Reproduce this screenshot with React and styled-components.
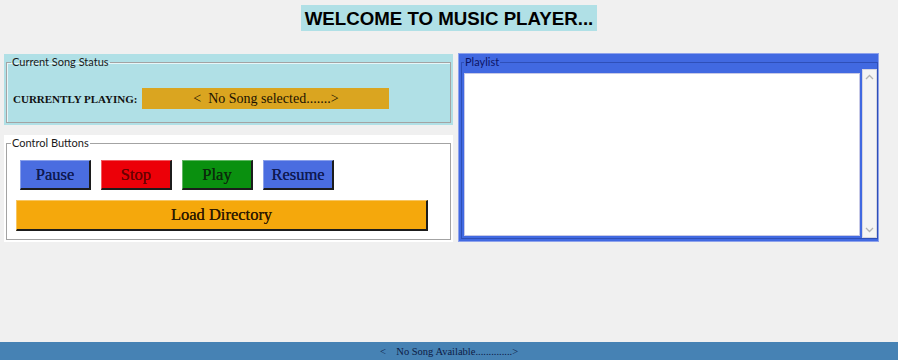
import React from 'react';
import styled, { createGlobalStyle } from 'styled-components';

const Global = createGlobalStyle`
  html, body {
    margin: 0;
    padding: 0;
    background: #f0f0f0;
  }
  #root {
    width: 898px;
    height: 360px;
    display: flex;
    flex-direction: column;
    overflow: hidden;
  }
`;

const Title = styled.h1`
  align-self: center;
  margin: 5px 0 0;
  height: 26px;
  width: 296px;
  box-sizing: border-box;
  background: #b0e0e6;
  font-family: "Liberation Sans", Arial, sans-serif;
  font-weight: bold;
  font-size: 18.7px;
  line-height: 27px;
  text-align: center;
  color: #000;
`;

const Main = styled.div`
  display: flex;
  gap: 5px;
  margin-top: 22px;
  padding-left: 4px;
`;

const LeftColumn = styled.div`
  display: flex;
  flex-direction: column;
  gap: 10px;
  width: 449px;
  margin-top: 1px;
`;

const Panel = styled.div`
  box-sizing: border-box;
  height: ${props => props.h}px;
  padding: 2px;
  background: ${props => props.bg};
  display: flex;
`;

const Group = styled.fieldset`
  flex: 1;
  margin: 0;
  min-width: 0;
  border: 1px solid #a3a3a3;
  box-shadow: inset 1px 1px 0 rgba(255,255,255,0.7);
  padding: 0 0 0 4px;
  display: flex;
  flex-direction: column;
`;

const Legend = styled.legend`
  padding: 0 1px;
  height: 12px;
  font-family: Lato, "Noto Sans", sans-serif;
  font-size: 11px;
  line-height: 12px;
  color: ${props => props.color || '#1a1a1a'};
`;

const StatusRow = styled.div`
  display: flex;
  align-items: center;
  gap: 5px;
  padding: 20px 0 0 2px;
`;

const StatusLabel = styled.span`
  font-family: "Liberation Serif", "Times New Roman", serif;
  font-weight: bold;
  font-size: 11px;
  color: #111;
`;

const NowPlaying = styled.div`
  width: 247px;
  height: 21px;
  background: #daa520;
  font-family: "Liberation Serif", "Times New Roman", serif;
  font-size: 14px;
  line-height: 22px;
  text-align: center;
  white-space: pre;
  color: #1a1200;
`;

const ButtonRow = styled.div`
  display: flex;
  gap: 10px;
  padding: 11px 0 0 9px;
`;

const Btn = styled.button`
  box-sizing: border-box;
  width: ${props => props.w || 71}px;
  height: ${props => props.h || 30}px;
  margin: 0;
  padding: 0;
  background: ${props => props.bg};
  color: ${props => props.fg};
  border-style: solid;
  border-width: 1px 2px 2px 1px;
  border-color: rgba(255,255,255,0.35) #1c1c1c #1c1c1c rgba(255,255,255,0.35);
  font-family: "Liberation Serif", Georgia, serif;
  font-size: 16.5px;
  text-shadow: 0 0 0.4px currentColor;
  cursor: pointer;
`;

const LoadRow = styled.div`
  padding: 10px 0 0 5px;
`;

const PlaylistPanel = styled.div`
  box-sizing: border-box;
  width: 421px;
  height: 189px;
  background: #4169e1;
  border: 1px solid #8ea2ec;
  padding: 2px 0 2px 2px;
  display: flex;
`;

const PlaylistGroup = styled.fieldset`
  flex: 1;
  margin: 0;
  min-width: 0;
  border: 1px solid #2e4fb8;
  padding: 1px 0 0 2px;
  display: flex;
  gap: 2px;
`;

const ListBox = styled.div`
  flex: 1;
  margin: 4px 0 2px;
  background: #fff;
  border: 1px solid #c7c9e6;
`;

const ScrollBar = styled.div`
  width: 15px;
  background: #f4f4f4;
  border: 1px solid #d6d6e0;
  display: flex;
  flex-direction: column;
  justify-content: space-between;
  align-items: center;
  padding: 4px 0;
  box-sizing: border-box;
`;

const Footer = styled.div`
  margin-top: auto;
  height: 18px;
  background: #4682b4;
  font-family: "Liberation Serif", "Times New Roman", serif;
  font-size: 10.5px;
  line-height: 19px;
  text-align: center;
  white-space: pre;
  color: #0d1b45;
`;

const Arrow = ({ down }) => (
  <svg width="9" height="6" viewBox="0 0 9 6">
    <path
      d={down ? 'M1 1 L4.5 4.5 L8 1' : 'M1 5 L4.5 1.5 L8 5'}
      fill="none"
      stroke="#b4b4b4"
      strokeWidth="1.3"
    />
  </svg>
);

const buttons = [
  { label: 'Pause', bg: '#4a6de0', fg: '#0f1a52' },
  { label: 'Stop', bg: '#ec0008', fg: '#6a0000' },
  { label: 'Play', bg: '#0a900f', fg: '#0b2a0b' },
  { label: 'Resume', bg: '#4a6de0', fg: '#0f1a52' },
];

export default function App() {
  return (
    <>
      <Global />
      <Title>WELCOME TO MUSIC PLAYER...</Title>
      <Main>
        <LeftColumn>
          <Panel h={71} bg="#b0e0e6">
            <Group>
              <Legend>Current Song Status</Legend>
              <StatusRow>
                <StatusLabel>CURRENTLY PLAYING:</StatusLabel>
                <NowPlaying>{'<  No Song selected.......>'}</NowPlaying>
              </StatusRow>
            </Group>
          </Panel>
          <Panel h={107} bg="#ffffff">
            <Group>
              <Legend>Control Buttons</Legend>
              <ButtonRow>
                {buttons.map(b => (
                  <Btn key={b.label} bg={b.bg} fg={b.fg}>{b.label}</Btn>
                ))}
              </ButtonRow>
              <LoadRow>
                <Btn w={412} h={31} bg="#f5a80c" fg="#2e1a00">Load Directory</Btn>
              </LoadRow>
            </Group>
          </Panel>
        </LeftColumn>
        <PlaylistPanel>
          <PlaylistGroup>
            <Legend color="#0c1466">Playlist</Legend>
            <ListBox />
            <ScrollBar>
              <Arrow />
              <Arrow down />
            </ScrollBar>
          </PlaylistGroup>
        </PlaylistPanel>
      </Main>
      <Footer>{'<    No Song Available..............>'}</Footer>
    </>
  );
}
